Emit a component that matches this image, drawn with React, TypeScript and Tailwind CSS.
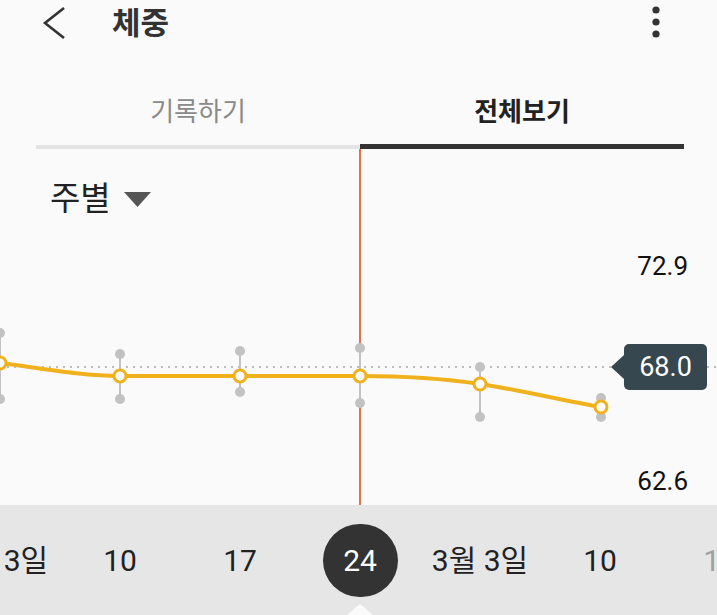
import React from 'react';

const font = "font-['Roboto','Noto_Sans_CJK_KR',sans-serif]";

const points = [
    { x: 0, y: 214, top: 184, bottom: 250 },
    { x: 120, y: 227, top: 205, bottom: 250 },
    { x: 240, y: 227, top: 202, bottom: 243 },
    { x: 360, y: 227, top: 199, bottom: 254 },
    { x: 480, y: 235, top: 218, bottom: 268 },
    { x: 601, y: 258, top: 249, bottom: 268 },
];

const dates = [
    { label: '2월 3일', muted: false },
    { label: '10', muted: false },
    { label: '17', muted: false },
    { label: '24', active: true },
    { label: '3월 3일', muted: false },
    { label: '10', muted: false },
    { label: '17', muted: true },
];

function Chart() {
    return (
        <svg className="absolute inset-0" width="717" height="356" viewBox="0 0 717 356">
            <line x1="0" y1="218" x2="717" y2="218" stroke="#bdbdbd" strokeWidth="2" strokeDasharray="2 5" />
            <line x1="360" y1="0" x2="360" y2="356" stroke="#e2734f" strokeWidth="2" />
            {points.map((p) => (
                <g key={p.x} fill="#c2c2c2">
                    <line x1={p.x} y1={p.top} x2={p.x} y2={p.bottom} stroke="#c2c2c2" strokeWidth="2" />
                    <circle cx={p.x} cy={p.top} r="5" />
                    <circle cx={p.x} cy={p.bottom} r="5" />
                </g>
            ))}
            <path
                d="M-40,209 C-15,211 -5,213 0,214 C40,219 80,227 120,227 L360,227 C400,227 440,229 480,235 C520,241 560,251 601,258"
                fill="none"
                stroke="#f0b11d"
                strokeWidth="4"
            />
            {points.map((p) => (
                <circle key={p.x} cx={p.x} cy={p.y} r="6" fill="#ffffff" stroke="#f0b11d" strokeWidth="3" />
            ))}
        </svg>
    );
}

export default function App() {
    return (
        <div className={`w-[717px] h-[615px] bg-[#fafafa] overflow-hidden flex flex-col ${font}`}>
            {/* header */}
            <div className="h-[46px] flex items-center shrink-0">
                <svg className="ml-[42px]" width="24" height="32" viewBox="0 0 24 32">
                    <polyline points="22,1 3,16 22,31" fill="none" stroke="#333" strokeWidth="2.6" />
                </svg>
                <h1 className="ml-[46px] text-[31px] font-bold text-[#333] leading-none">체중</h1>
                <svg className="ml-auto mr-[56px]" width="10" height="34" viewBox="0 0 10 34">
                    <circle cx="5" cy="4" r="3.6" fill="#333" />
                    <circle cx="5" cy="16" r="3.6" fill="#333" />
                    <circle cx="5" cy="28" r="3.6" fill="#333" />
                </svg>
            </div>

            {/* tabs */}
            <div className="pl-[36px] pr-[33px] shrink-0">
                <div className="flex">
                    <div className="flex-1 h-[98px] pt-[34px] flex items-center justify-center text-[26px] text-[#8a8a8a]">기록하기</div>
                    <div className="flex-1 h-[98px] pt-[34px] flex items-center justify-center text-[26px] font-bold text-[#222]">전체보기</div>
                </div>
                <div className="flex items-end h-[5px]">
                    <div className="flex-1 h-[4px] bg-[#e4e4e4]" />
                    <div className="flex-1 h-[5px] bg-[#333]" />
                </div>
            </div>

            {/* chart */}
            <div className="relative h-[356px] shrink-0">
                <Chart />
                <div className="relative pt-[30px] pl-[50px] flex items-center gap-[13px]">
                    <span className="text-[33px] leading-[40px] text-[#222]">주별</span>
                    <svg width="27" height="16" viewBox="0 0 27 16">
                        <polygon points="0,1 27,1 13.5,16" fill="#555" />
                    </svg>
                </div>
                <span className="absolute right-[29px] top-[102px] text-[26px] leading-[30px] text-[#111]">72.9</span>
                <span className="absolute right-[29px] top-[317px] text-[26px] leading-[30px] text-[#111]">62.6</span>
                <div className="absolute left-[611px] top-[195px] flex items-center">
                    <svg width="13" height="24" viewBox="0 0 13 24">
                        <polygon points="0,12 13,0 13,24" fill="#37474f" />
                    </svg>
                    <div className="w-[83px] h-[46px] rounded-[5px] bg-[#37474f] flex items-center justify-center text-[27px] text-white">68.0</div>
                </div>
            </div>

            {/* date strip */}
            <div className="relative h-[110px] bg-[#e6e6e6] flex items-center shrink-0">
                <div className="flex -ml-[60px]">
                    {dates.map((d, i) => (
                        <div key={i} className="w-[120px] shrink-0 flex items-center justify-center">
                            {d.active ? (
                                <div className="w-[75px] h-[73px] rounded-full bg-[#333] flex items-center justify-center text-[30px] text-white">
                                    {d.label}
                                </div>
                            ) : (
                                <span className={`text-[30px] whitespace-nowrap ${d.muted ? 'text-[#a0a0a0]' : 'text-[#222]'}`}>{d.label}</span>
                            )}
                        </div>
                    ))}
                </div>
                <svg className="absolute left-[347px] bottom-0" width="26" height="11" viewBox="0 0 26 11">
                    <polygon points="0,11 13,0 26,11" fill="#fafafa" />
                </svg>
            </div>
        </div>
    );
}
